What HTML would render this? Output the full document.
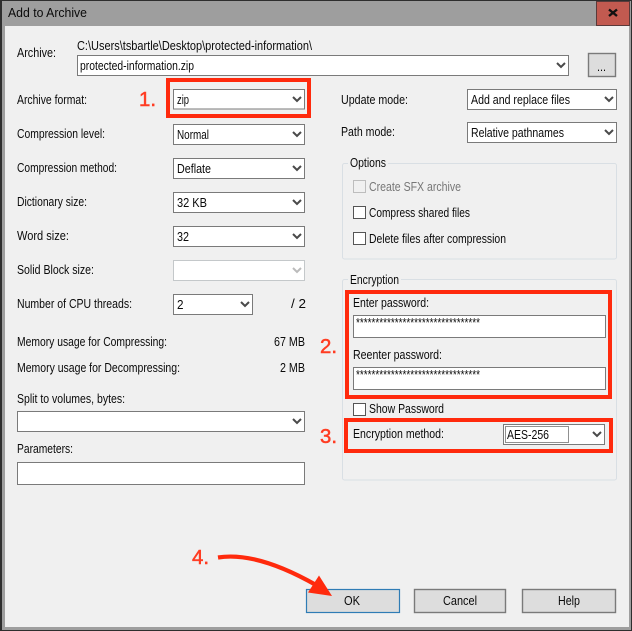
<!DOCTYPE html>
<html>
<head>
<meta charset="utf-8">
<style>
html,body{margin:0;padding:0;background:#f0f0f0;width:632px;height:631px;overflow:hidden}
svg{display:block}
text{font-family:"Liberation Sans",sans-serif;font-size:13px;fill:#0a0a0a}
.b{fill:#fff;stroke:#7a7a7a;stroke-width:1}
.d{fill:#fff;stroke:#c4c8ca;stroke-width:1}
.btn{fill:#dddddd;stroke:#7a7a7a;stroke-width:1.4}
.chev{fill:none;stroke:#4a4a4a;stroke-width:2}
.grp{fill:none;stroke:#d9dfe4;stroke-width:1}
.red{fill:none;stroke:#ff2a0d;stroke-width:4}
.n{font-size:20px;fill:#ff3c22;stroke:#ff3c22;stroke-width:.5}
</style>
</head>
<body>
<svg width="632" height="631" viewBox="0 0 632 631" xmlns="http://www.w3.org/2000/svg">
<rect width="632" height="631" fill="#2e2e2e"/>
<rect x="2" y="1" width="629" height="629" fill="#9e9e9e"/>
<rect x="5" y="26" width="624" height="601" fill="#f0f0f0"/>
<rect x="596.5" y="1.5" width="33" height="24" fill="#c25a50" stroke="#5a3a3a"/>
<path d="M609 9.500l8 6.500M617 9.500l-8 6.500" stroke="#111" stroke-width="2.4" fill="none"/>
<text x="8" y="17" textLength="79" lengthAdjust="spacingAndGlyphs">Add to Archive</text>

<text x="17" y="57" textLength="39" lengthAdjust="spacingAndGlyphs">Archive:</text>
<text x="77" y="50" textLength="235" lengthAdjust="spacingAndGlyphs">C:\Users\tsbartle\Desktop\protected-information\</text>
<rect class="b" x="77.5" y="55.500" width="491" height="20"/>
<text x="80" y="70" textLength="114" lengthAdjust="spacingAndGlyphs">protected-information.zip</text>
<path class="chev" d="M557 63l4 4 4-4"/>
<rect class="btn" x="588.5" y="53.500" width="27" height="23"/>
<text x="597" y="71" textLength="9" lengthAdjust="spacingAndGlyphs">...</text>

<text x="17" y="104" textLength="70" lengthAdjust="spacingAndGlyphs">Archive format:</text>
<rect class="b" x="173.5" y="89.500" width="131" height="19.500"/>
<text x="177" y="104" textLength="12" lengthAdjust="spacingAndGlyphs">zip</text>
<path class="chev" d="M293 97l4 4 4-4"/>

<text x="17" y="138" textLength="88" lengthAdjust="spacingAndGlyphs">Compression level:</text>
<rect class="b" x="173.5" y="124.500" width="131" height="20"/>
<text x="177" y="139" textLength="32" lengthAdjust="spacingAndGlyphs">Normal</text>
<path class="chev" d="M293 132l4 4 4-4"/>

<text x="17" y="172" textLength="100" lengthAdjust="spacingAndGlyphs">Compression method:</text>
<rect class="b" x="173.5" y="158.500" width="131" height="20"/>
<text x="177" y="173" textLength="34" lengthAdjust="spacingAndGlyphs">Deflate</text>
<path class="chev" d="M293 166l4 4 4-4"/>

<text x="17" y="206" textLength="70" lengthAdjust="spacingAndGlyphs">Dictionary size:</text>
<rect class="b" x="173.5" y="192.500" width="131" height="20"/>
<text x="177" y="207" textLength="30" lengthAdjust="spacingAndGlyphs">32 KB</text>
<path class="chev" d="M293 200l4 4 4-4"/>

<text x="17" y="240" textLength="52" lengthAdjust="spacingAndGlyphs">Word size:</text>
<rect class="b" x="173.5" y="226.500" width="131" height="20"/>
<text x="177" y="241" textLength="12" lengthAdjust="spacingAndGlyphs">32</text>
<path class="chev" d="M293 234l4 4 4-4"/>

<text x="17" y="274" textLength="77" lengthAdjust="spacingAndGlyphs">Solid Block size:</text>
<rect class="d" x="173.5" y="260.500" width="131" height="20"/>
<path class="chev" style="stroke:#bbb" d="M293 268l4 4 4-4"/>

<text x="17" y="308" textLength="115" lengthAdjust="spacingAndGlyphs">Number of CPU threads:</text>
<rect class="b" x="173.5" y="294.500" width="79" height="20"/>
<text x="177" y="309" textLength="6.500" lengthAdjust="spacingAndGlyphs">2</text>
<path class="chev" d="M241 302l4 4 4-4"/>
<text x="291" y="308" textLength="15" lengthAdjust="spacingAndGlyphs">/ 2</text>

<text x="17" y="346" textLength="150" lengthAdjust="spacingAndGlyphs">Memory usage for Compressing:</text>
<text x="274" y="346" textLength="31" lengthAdjust="spacingAndGlyphs">67 MB</text>
<text x="17" y="372" textLength="163" lengthAdjust="spacingAndGlyphs">Memory usage for Decompressing:</text>
<text x="280" y="372" textLength="25" lengthAdjust="spacingAndGlyphs">2 MB</text>

<text x="17" y="403" textLength="108" lengthAdjust="spacingAndGlyphs">Split to volumes, bytes:</text>
<rect class="b" x="17.5" y="411.500" width="287" height="20"/>
<path class="chev" d="M293 419l4 4 4-4"/>
<text x="17" y="453" textLength="56" lengthAdjust="spacingAndGlyphs">Parameters:</text>
<rect class="b" x="17.5" y="462.500" width="287" height="22"/>

<text x="341" y="104" textLength="67" lengthAdjust="spacingAndGlyphs">Update mode:</text>
<rect class="b" x="467.5" y="89.500" width="149" height="20"/>
<text x="471" y="104" textLength="99" lengthAdjust="spacingAndGlyphs">Add and replace files</text>
<path class="chev" d="M605 97l4 4 4-4"/>
<text x="341" y="136" textLength="54" lengthAdjust="spacingAndGlyphs">Path mode:</text>
<rect class="b" x="467.5" y="122.500" width="149" height="20"/>
<text x="471" y="137" textLength="93" lengthAdjust="spacingAndGlyphs">Relative pathnames</text>
<path class="chev" d="M605 130l4 4 4-4"/>

<rect class="grp" x="342.5" y="163.500" width="274" height="95.500" rx="2"/>
<rect x="348" y="158" width="40" height="12" fill="#f0f0f0"/>
<text x="350" y="167" textLength="36" lengthAdjust="spacingAndGlyphs">Options</text>
<rect x="353.5" y="180.500" width="12" height="12" fill="#f0f0f0" stroke="#bdbdbd"/>
<text x="369" y="191" textLength="92" lengthAdjust="spacingAndGlyphs" style="fill:#777">Create SFX archive</text>
<rect x="353.5" y="206.500" width="12" height="12" fill="#fff" stroke="#555"/>
<text x="369" y="217" textLength="101" lengthAdjust="spacingAndGlyphs">Compress shared files</text>
<rect x="353.5" y="232.500" width="12" height="12" fill="#fff" stroke="#555"/>
<text x="369" y="243" textLength="137" lengthAdjust="spacingAndGlyphs">Delete files after compression</text>

<rect class="grp" x="342.5" y="279.500" width="274" height="200.500" rx="2"/>
<rect x="348" y="274" width="53" height="12" fill="#f0f0f0"/>
<text x="350" y="284" textLength="49" lengthAdjust="spacingAndGlyphs">Encryption</text>

<text x="353" y="307" textLength="76" lengthAdjust="spacingAndGlyphs">Enter password:</text>
<rect class="b" x="353.5" y="315.500" width="252" height="22"/>
<text x="356" y="327" textLength="124" lengthAdjust="spacingAndGlyphs">********************************</text>
<text x="353" y="359" textLength="89" lengthAdjust="spacingAndGlyphs">Reenter password:</text>
<rect class="b" x="353.5" y="367.500" width="252" height="22"/>
<text x="356" y="379" textLength="124" lengthAdjust="spacingAndGlyphs">********************************</text>

<rect x="353.5" y="403.500" width="12" height="12" fill="#fff" stroke="#555"/>
<text x="369" y="413" textLength="75" lengthAdjust="spacingAndGlyphs">Show Password</text>
<text x="353" y="438" textLength="91" lengthAdjust="spacingAndGlyphs">Encryption method:</text>
<rect class="b" x="503.5" y="424.500" width="101" height="20"/>
<rect x="505.5" y="426.500" width="63" height="16" fill="none" stroke="#222" stroke-dasharray="1 1"/>
<text x="507" y="439" textLength="42" lengthAdjust="spacingAndGlyphs">AES-256</text>
<path class="chev" d="M593 432l4 4 4-4"/>

<rect x="306.5" y="589.500" width="93" height="23" fill="#dddddd" stroke="#2f7cb5" stroke-width="1.2"/>
<text x="344" y="605" textLength="16" lengthAdjust="spacingAndGlyphs">OK</text>
<rect class="btn" x="414.5" y="589.500" width="91" height="23"/>
<text x="443" y="605" textLength="34" lengthAdjust="spacingAndGlyphs">Cancel</text>
<rect class="btn" x="522.5" y="589.500" width="93" height="23"/>
<text x="558" y="605" textLength="22" lengthAdjust="spacingAndGlyphs">Help</text>

<rect class="red" x="168" y="80" width="141" height="36"/>
<rect class="red" x="347" y="292" width="263" height="105"/>
<rect class="red" x="346" y="420" width="265" height="31"/>

<text class="n" x="139" y="106" textLength="17" lengthAdjust="spacingAndGlyphs">1.</text>
<text class="n" x="320" y="353" textLength="17" lengthAdjust="spacingAndGlyphs">2.</text>
<text class="n" x="320" y="443" textLength="17" lengthAdjust="spacingAndGlyphs">3.</text>
<text class="n" x="192" y="564" textLength="17" lengthAdjust="spacingAndGlyphs">4.</text>

<path d="M218 557.500C240 554 272 560 316 585" fill="none" stroke="#ff2a0d" stroke-width="4.200"/>
<path d="M319 575.500L308 592.500L332 596Z" fill="#ff2a0d"/>
</svg>
</body>
</html>
